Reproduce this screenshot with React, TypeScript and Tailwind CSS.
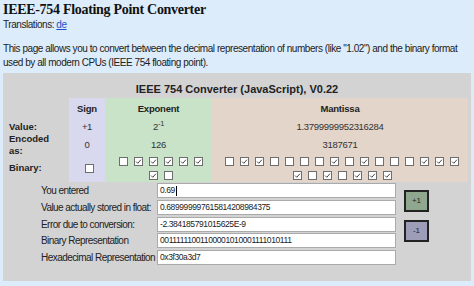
const sans = "font-['Liberation_Sans',Arial,sans-serif]"

const expBits = '01111110'
const manBits = '01100001010001111010111'

function Bit({ on }: { on: boolean }) {
  return (
    <span className="ml-[5px] mr-[1px] flex h-[9px] w-[9px] items-center justify-center border border-[#6e6e6e] bg-white">
      {on && (
        <svg viewBox="0 0 9 9" className="h-[7px] w-[7px]">
          <path d="M1.4 4.6 L3.6 6.8 L7.6 2.2" stroke="#3a3a3a" strokeWidth="1.2" fill="none" />
        </svg>
      )}
    </span>
  )
}

function Bits({ bits }: { bits: string }) {
  return (
    <div className="flex flex-wrap justify-center gap-y-[5px] px-[3px]">
      {bits.split('').map((b, i) => (
        <Bit key={i} on={b === '1'} />
      ))}
    </div>
  )
}

const fields = [
  { label: 'You entered', value: '0.69', caret: true },
  { label: 'Value actually stored in float:', value: '0.689999997615814208984375' },
  { label: 'Error due to conversion:', value: '-2.384185791015625E-9' },
  { label: 'Binary Representation', value: '00111111001100001010001111010111' },
  { label: 'Hexadecimal Representation', value: '0x3f30a3d7' },
]

export default function App() {
  return (
    <div className={`h-[286px] w-full overflow-hidden bg-[#dcecfb] px-[3px] pt-[2px] text-[#222] ${sans}`}>
      <h1 className="font-['Liberation_Serif',serif] text-[14px] font-bold leading-[16px] tracking-[-0.3px] text-[#111]">
        IEEE-754 Floating Point Converter
      </h1>
      <p className="text-[10px] leading-[14px] tracking-[-0.45px]">
        Translations: <a className="text-[#1c50c8] underline">de</a>
      </p>
      <p className="mt-[10px] whitespace-nowrap text-[10px] leading-[14px] tracking-[-0.45px]">
        This page allows you to convert between the decimal representation of numbers (like "1.02") and the binary format
        <br />
        used by all modern CPUs (IEEE 754 floating point).
      </p>

      <div className="mt-[3px] w-[468px] bg-[#d3d3d3]">
        <div className="h-[25px] pt-[9px] text-center text-[11px] font-bold leading-[14px] text-[#222]">
          IEEE 754 Converter (JavaScript), V0.22
        </div>

        <div className="grid grid-cols-[66px_36px_107px_256px] grid-rows-[22px_15px_20px_27px] text-[9.5px] tracking-[-0.3px] text-[#333]">
          <div />
          <div className="flex items-center justify-center bg-[#d8d8ee] font-bold tracking-[-0.2px] text-[#222]">Sign</div>
          <div className="flex items-center justify-center bg-[#c9e3c9] font-bold tracking-[-0.2px] text-[#222]">Exponent</div>
          <div className="flex items-center justify-center bg-[#e3d5c9] font-bold tracking-[-0.2px] text-[#222]">Mantissa</div>

          <div className="flex items-center pl-[6px] font-bold tracking-normal text-[#222]">Value:</div>
          <div className="flex items-center justify-center bg-[#d8d8ee]">+1</div>
          <div className="flex items-center justify-center bg-[#c9e3c9]">
            2<sup className="text-[7.5px]">-1</sup>
          </div>
          <div className="flex items-center justify-center bg-[#e3d5c9]">1.3799999952316284</div>

          <div className="flex items-center pl-[6px] font-bold leading-[12px] tracking-normal text-[#222]">
            Encoded
            <br />
            as:
          </div>
          <div className="flex items-center justify-center bg-[#d8d8ee]">0</div>
          <div className="flex items-center justify-center bg-[#c9e3c9]">126</div>
          <div className="flex items-center justify-center bg-[#e3d5c9]">3187671</div>

          <div className="flex items-center pl-[6px] font-bold tracking-normal text-[#222]">Binary:</div>
          <div className="flex items-center justify-center bg-[#d8d8ee]">
            <Bits bits="0" />
          </div>
          <div className="flex items-center justify-center bg-[#c9e3c9]">
            <Bits bits={expBits} />
          </div>
          <div className="flex items-center justify-center bg-[#e3d5c9]">
            <Bits bits={manBits} />
          </div>
        </div>

        <div className="flex h-[99px] pl-[38px] pt-[1px]">
          <div className="grid grid-cols-[116px_239px] grid-rows-[repeat(5,16.75px)]">
            {fields.map((f) => (
              <div key={f.label} className="contents">
                <div className="flex h-[15px] items-center whitespace-nowrap text-[10px] tracking-[-0.55px] text-[#222]">
                  {f.label}
                </div>
                <div className="flex h-[15px] items-center whitespace-nowrap border border-[#aaa] bg-white pl-[2px] text-[8.5px] tracking-[-0.4px] text-[#222]">
                  {f.value}
                  {f.caret && <span className="ml-[1px] h-[10px] w-[1px] bg-black" />}
                </div>
              </div>
            ))}
          </div>
          <div className="ml-[8px] flex flex-col gap-[8px] pt-[7px]">
            <button className="h-[22px] w-[25px] border-2 border-[#222] bg-[#8ea78e] text-[8px] text-[#222]">+1</button>
            <button className="h-[22px] w-[25px] border-2 border-[#222] bg-[#9d9db7] text-[8px] text-[#222]">-1</button>
          </div>
        </div>
      </div>
    </div>
  )
}
